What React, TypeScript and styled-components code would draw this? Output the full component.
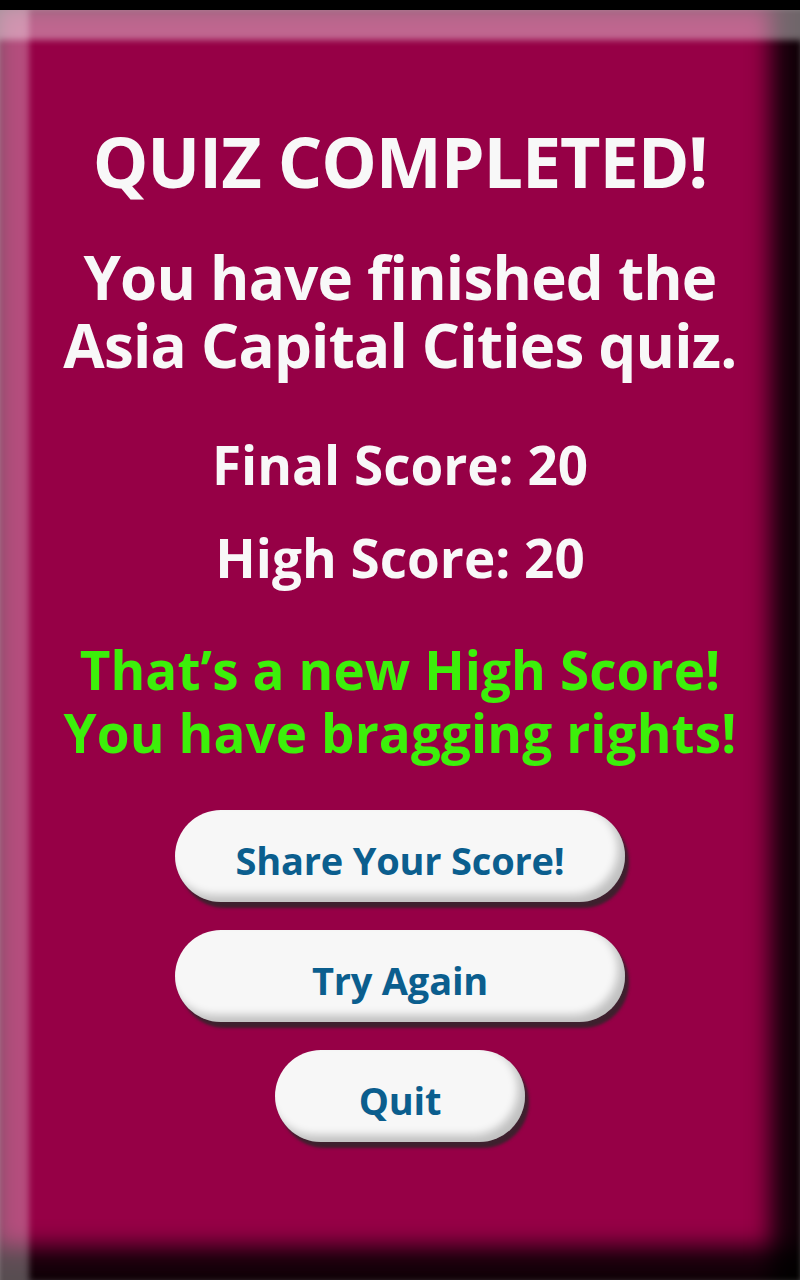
import React from "react"
import styled, { createGlobalStyle } from "styled-components"

const GlobalStyle = createGlobalStyle`
  html, body {
    margin: 0;
    padding: 0;
    background: #000;
  }

  body {
    font-family: "Open Sans", "DejaVu Sans", sans-serif;
  }
`

const Screen = styled.div`
  width: 800px;
  height: 1280px;
  padding-top: 10px;
  box-sizing: border-box;
  background: #000;
  overflow: hidden;
`

// bevelled magenta board, light on top/left and dark on right/bottom
const Board = styled.div`
  height: 1270px;
  box-sizing: border-box;
  background: #960046;
  padding-top: 109px;
  display: flex;
  flex-direction: column;
  align-items: center;
  box-shadow:
    inset 0 32px 6px -2px rgba(255, 255, 255, 0.4),
    inset 31px 0 6px -2px rgba(255, 255, 255, 0.3),
    inset -34px 0 22px -4px rgba(0, 0, 0, 0.85),
    inset 0 -38px 22px -4px rgba(0, 0, 0, 0.85);
`

type LineProps = {
  size: number
  lineHeight: number
  gap: number
  tracking?: number
  color?: string
}

const TextBlock = styled.div<LineProps>`
  margin-top: ${props => props.gap}px;
  font-size: ${props => props.size}px;
  line-height: ${props => props.lineHeight}px;
  letter-spacing: ${props => props.tracking || 0}px;
  font-weight: 700;
  color: ${props => props.color || "#f8f8f8"};
  text-align: center;
  white-space: nowrap;
`

const ButtonStack = styled.div`
  margin-top: 46px;
  display: flex;
  flex-direction: column;
  align-items: center;
  gap: 28px;
`

type PillProps = {
  width: number
}

const PillButton = styled.button<PillProps>`
  width: ${props => props.width}px;
  height: 92px;
  border: none;
  border-radius: 46px;
  background: #f7f7f7;
  color: #0b5e8e;
  font-family: "Open Sans", "DejaVu Sans", sans-serif;
  font-weight: 700;
  font-size: 38px;
  letter-spacing: -0.2px;
  padding: 8px 0 0 0;
  cursor: pointer;
  box-shadow:
    4px 6px 3px rgba(40, 40, 40, 0.8),
    inset -7px -7px 8px rgba(0, 0, 0, 0.22);
`

const App: React.FC = () => {
  return (
    <Screen>
      <GlobalStyle />
      <Board>
        <TextBlock size={70} lineHeight={84} gap={0} tracking={-1.1}>
          QUIZ COMPLETED!
        </TextBlock>

        <TextBlock size={60} lineHeight={68} gap={40} tracking={-0.75}>
          You have finished the
          <br />
          Asia Capital Cities quiz.
        </TextBlock>

        <TextBlock size={53} lineHeight={93} gap={39}>
          Final Score: 20
          <br />
          High Score: 20
        </TextBlock>

        <TextBlock size={53} lineHeight={63} gap={34} tracking={0.1} color="#3cf00a">
          That’s a new High Score!
          <br />
          You have bragging rights!
        </TextBlock>

        <ButtonStack>
          <PillButton width={450}>Share Your Score!</PillButton>
          <PillButton width={450}>Try Again</PillButton>
          <PillButton width={250}>Quit</PillButton>
        </ButtonStack>
      </Board>
    </Screen>
  )
}

export default App
